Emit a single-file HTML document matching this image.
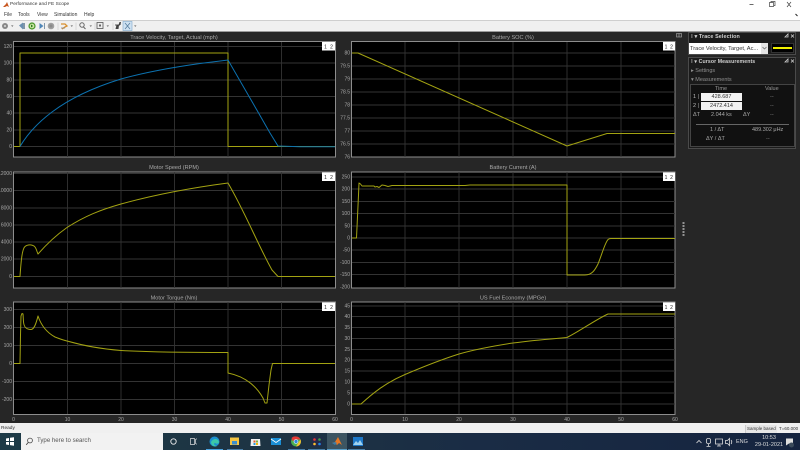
<!DOCTYPE html>
<html><head><meta charset="utf-8"><style>
html,body{margin:0;padding:0;background:#262626}
body{width:800px;height:450px;overflow:hidden;position:relative;font-family:"Liberation Sans",sans-serif}
#r{position:absolute;left:0;top:0;width:800px;height:450px;overflow:hidden;background:#262626;filter:blur(.35px)}
.a{position:absolute}
.t{position:absolute;white-space:nowrap;color:#333;font-size:5.5px;line-height:8px}
.w{color:#bdbdbd}
</style></head><body><div id="r">
<div class="a" style="left:0;top:0;width:800px;height:20px;background:#fff"></div>
<div class="a" style="left:0;top:20px;width:800px;height:1px;background:#cfcfcf"></div>
<div class="a" style="left:0;top:21px;width:800px;height:10px;background:#f0f0f0"></div>
<div class="a" style="left:0;top:31px;width:800px;height:1px;background:#9a9a9a"></div>
<svg class="a" style="left:3px;top:2px" width="6" height="6" viewBox="0 0 6 6"><path d="M0 5L3 2L4 0L6 5L4 4L2 5Z" fill="#c8551e"/></svg>
<div class="t" style="left:10px;top:1px;font-size:4.8px">Performance and FE Scope</div>
<div class="t" style="left:4px;top:11px;font-size:5px">File</div>
<div class="t" style="left:18px;top:11px;font-size:5px">Tools</div>
<div class="t" style="left:37px;top:11px;font-size:5px">View</div>
<div class="t" style="left:54px;top:11px;font-size:5px">Simulation</div>
<div class="t" style="left:84px;top:11px;font-size:5px">Help</div>
<svg class="a" style="left:0;top:0" width="800" height="32" viewBox="0 0 800 32">
<path d="M749.500 4.500h4" stroke="#444" stroke-width=".8" fill="none"/>
<path d="M769.500 2.500h4v4h-4zM771 2.500v-1h4v4h-1" stroke="#444" stroke-width=".7" fill="none"/>
<path d="M787 2l4 5M791 2l-4 5" stroke="#444" stroke-width=".7" fill="none"/>
<path d="M795.500 14l2 2" stroke="#222" stroke-width="1"/>
<circle cx="5" cy="26" r="3" fill="#888"/><circle cx="5" cy="26" r="1" fill="#ddd"/>
<path d="M11 25.500h2.500l-1.200 1.200z" fill="#555"/>
<path d="M19 25.500l4-3v7z" fill="#6a8fb0"/><rect x="23" y="23" width="2" height="6" fill="#7f95a8"/>
<circle cx="32" cy="26" r="3.600" fill="#4e9a2e"/><circle cx="32" cy="26" r="2.300" fill="#cfe8a8"/><path d="M31 24.500l2.200 1.500-2.200 1.500z" fill="#2c7a1c"/>
<path d="M39.500 23l4 3-4 3z" fill="#4f86b8"/><rect x="44" y="23" width="1" height="6" fill="#7f95a8"/>
<circle cx="51" cy="26" r="3.300" fill="#a0a0a0"/><rect x="49.500" y="24.500" width="3" height="3" fill="#8a8a8a"/>
<path d="M58 22.500V30M76 22.500V30M95 22.500V30M113 22.500V30" stroke="#c8c8c8" stroke-width=".6"/>
<path d="M61 24h4l2 2-2 1-3 2" stroke="#d89030" stroke-width="1.300" fill="none"/><path d="M61 28h4" stroke="#888" stroke-width=".8"/>
<path d="M70.500 25.500h2.500l-1.200 1.200z" fill="#555"/>
<circle cx="82" cy="25" r="2.200" fill="none" stroke="#666" stroke-width="1"/><path d="M83.500 27l2 2" stroke="#666" stroke-width="1.100"/>
<path d="M89.500 25.500h2.500l-1.200 1.200z" fill="#555"/>
<rect x="97" y="22.500" width="6" height="6" fill="#eee" stroke="#555" stroke-width=".8"/><rect x="99" y="24.500" width="2" height="2" fill="#666"/>
<path d="M106.500 25.500h2.500l-1.200 1.200z" fill="#555"/>
<path d="M115.500 29l1-4h2l1-3h1.500l-.5 3h-1.500l-.5 4z" fill="#444"/><path d="M115 25h5" stroke="#333" stroke-width=".8"/>
<rect x="123" y="21.500" width="9" height="9" fill="#cfe2f2" stroke="#7fa8cc" stroke-width=".6"/><path d="M125 29l5-6M125 23l5 6" stroke="#5a7f9f" stroke-width=".8"/>
<path d="M134 25.500h2.500l-1.200 1.200z" fill="#555"/>
</svg>

<svg class="a" style="left:0;top:32px" width="686" height="391" viewBox="0 32 686 391" font-family="Liberation Sans, sans-serif" font-size="5" fill="#a8a8a8">
<g fill="#000" stroke="#8d8d8d" stroke-width="1">
<rect x="13.500" y="41.500" width="322" height="115.500"/>
<rect x="351.500" y="41.500" width="323.500" height="115.500"/>
<rect x="13.500" y="172" width="322" height="116"/>
<rect x="351.500" y="172" width="323.500" height="116"/>
<rect x="13.500" y="302" width="322" height="112.500"/>
<rect x="351.500" y="302" width="323.500" height="112.500"/>
</g>
<g stroke="#333" stroke-width=".9" fill="none">
<path d="M14 46.500H335M14 63H335M14 80H335M14 96.500H335M14 113H335M14 130H335M14 146.500H335M67.500 42V157M121 42V157M174.500 42V157M228 42V157M281.500 42V157"/>
<path d="M352 53H675M352 66H675M352 79H675M352 92H675M352 105H675M352 118H675M352 131H675M352 144H675M405 42V157M459 42V157M513 42V157M567 42V157M621 42V157"/>
<path d="M14 173.500H335M14 190.500H335M14 208H335M14 225H335M14 242H335M14 259H335M14 276.500H335M67.500 172V288M121 172V288M174.500 172V288M228 172V288M281.500 172V288"/>
<path d="M352 177H675M352 189H675M352 201.500H675M352 213.500H675M352 226H675M352 238H675M352 250H675M352 262.500H675M352 274.500H675M405 172V288M459 172V288M513 172V288M567 172V288M621 172V288"/>
<path d="M14 309.500H335M14 327.500H335M14 345.500H335M14 363.500H335M14 381.500H335M14 399.500H335M67.500 302V414M121 302V414M174.500 302V414M228 302V414M281.500 302V414"/>
<path d="M352 306H675M352 316.500H675M352 327.500H675M352 338.500H675M352 349.500H675M352 360H675M352 371H675M352 382H675M352 393H675M352 404H675M405 302V414M459 302V414M513 302V414M567 302V414M621 302V414"/>
</g>
<g fill="none" stroke="#a3a312" stroke-width="1" stroke-linejoin="round">
<path d="M14 146.500H20V53H228V146.500H335"/>
<path d="M352 53H358L567 146L607 133.500H675"/>
<path d="M14 276.500H20C21 262 22 249 25 246.500C28 244 33 244.500 35 247C36.500 249 37 252 38 254C45 246 55 236 67 227.500C85 216 100 210 121 204C150 196 190 188 228 183C245 212 258 245 272 270L278 276.500H335"/>
<path d="M352 238H356.500L358.500 195L359 183L360.500 184L362 186H374L375 187L377 186.500L379 187.500L382 185L385 185.500L388 186.500L392 185.500H465L470 185H567V275H585C592 275 595 270 598 264C602 254 604 246 607 241C608 239 609 238.500 611 238.500H675"/>
<path d="M14 363.500H20L20.500 335L21 316L22 313.500L23 314L23.500 322C24 327 26 329.500 31 329.500C34 329.500 36 324 38 316C40 322 44 331 55 337C60 339 63 340 67 341C85 346 100 349 121 350.500C150 352 190 352.500 228 352.500V373C243 376 255 384 263 398L265 403H267L269 385L271 370L272.500 363.500H335"/>
<path d="M352 404H361C372 394 385 383 405 374.500C425 366 440 360 459 354C480 348 500 345 513 343C535 340 550 339 567 337.500C580 331 595 320 608 314H675"/>
</g>
<path d="M20 146.500C28 133 40 121 52 112C72 97 95 87 121 79C150 71 175 67 200 63.500L228 60L258 112L270 133L278 146L300 146.800H335" fill="none" stroke="#0c72b0" stroke-width="1"/>
<g text-anchor="middle" font-size="5.600">
<text x="174" y="39">Trace Velocity, Target, Actual (mph)</text>
<text x="513" y="39">Battery SOC (%)</text>
<text x="174" y="169">Motor Speed (RPM)</text>
<text x="513" y="169">Battery Current (A)</text>
<text x="174" y="299.500">Motor Torque (Nm)</text>
<text x="513" y="299.500">US Fuel Economy (MPGe)</text>
</g>
<g text-anchor="end">
<text x="12" y="48">120</text><text x="12" y="64.700">100</text><text x="12" y="81.500">80</text><text x="12" y="98">60</text><text x="12" y="114.700">40</text><text x="12" y="131.500">20</text><text x="12" y="148">0</text>
<text x="350" y="54.700">80</text><text x="350" y="67.700">79.5</text><text x="350" y="80.700">79</text><text x="350" y="93.700">78.5</text><text x="350" y="106.700">78</text><text x="350" y="119.700">77.5</text><text x="350" y="132.700">77</text><text x="350" y="145.700">76.5</text><text x="350" y="158.500">76</text>
<text x="12" y="175">12000</text><text x="12" y="192">10000</text><text x="12" y="209.700">8000</text><text x="12" y="226.700">6000</text><text x="12" y="243.700">4000</text><text x="12" y="260.700">2000</text><text x="12" y="278.200">0</text>
<text x="350" y="178.700">250</text><text x="350" y="190.700">200</text><text x="350" y="203">150</text><text x="350" y="215">100</text><text x="350" y="227.700">50</text><text x="350" y="239.700">0</text><text x="350" y="251.700">-50</text><text x="350" y="264">-100</text><text x="350" y="276">-150</text><text x="350" y="288.700">-200</text>
<text x="12" y="311">300</text><text x="12" y="329">200</text><text x="12" y="347">100</text><text x="12" y="365">0</text><text x="12" y="383">-100</text><text x="12" y="401">-200</text>
<text x="350" y="307.700">45</text><text x="350" y="318">40</text><text x="350" y="329">35</text><text x="350" y="340">30</text><text x="350" y="351">25</text><text x="350" y="361.700">20</text><text x="350" y="372.700">15</text><text x="350" y="383.700">10</text><text x="350" y="394.700">5</text><text x="350" y="405.700">0</text>
</g>
<g text-anchor="middle">
<text x="13.500" y="421">0</text><text x="67.500" y="421">10</text><text x="121" y="421">20</text><text x="174.500" y="421">30</text><text x="228" y="421">40</text><text x="281.500" y="421">50</text><text x="335" y="421">60</text>
<text x="351.500" y="421">0</text><text x="405" y="421">10</text><text x="459" y="421">20</text><text x="513" y="421">30</text><text x="567" y="421">40</text><text x="621" y="421">50</text><text x="675" y="421">60</text>
</g>
<g>
<rect x="322" y="42" width="13" height="8.500" fill="#fff"/><rect x="663" y="42" width="12" height="8.500" fill="#fff"/>
<rect x="322" y="172.500" width="13" height="8.500" fill="#fff"/><rect x="663" y="172.500" width="12" height="8.500" fill="#fff"/>
<rect x="322" y="302.500" width="13" height="8.500" fill="#fff"/><rect x="663" y="302.500" width="12" height="8.500" fill="#fff"/>
</g>
<g fill="#222" font-size="5" text-anchor="middle">
<text x="325.500" y="48.500">1</text><text x="331.500" y="48.500">2</text><text x="666" y="48.500">1</text><text x="671.500" y="48.500">2</text>
<text x="325.500" y="179">1</text><text x="331.500" y="179">2</text><text x="666" y="179">1</text><text x="671.500" y="179">2</text>
<text x="325.500" y="309">1</text><text x="331.500" y="309">2</text><text x="666" y="309">1</text><text x="671.500" y="309">2</text>
</g>
<rect x="676.500" y="33.500" width="5" height="3.500" fill="#333" stroke="#aaa" stroke-width=".6"/>
<path d="M679 33.500V37" stroke="#aaa" stroke-width=".6"/>
<path d="M683.500 222.500V223.500M683.500 225.500V226.500M683.500 228.500V229.500M683.500 231.500V232.500M683.500 234.500V235.500" stroke="#fff" stroke-width="2"/>
</svg>

<div class="a" style="left:688px;top:32px;width:108px;height:23px;background:#1b1b1b;border:1px solid #4a4a4a;box-sizing:border-box"></div>
<div class="t w" style="left:691px;top:33px;font-size:5.400px;font-weight:bold;color:#d0d0d0;letter-spacing:.1px">⁞ ▾ Trace Selection</div>
<div class="a" style="left:689px;top:43px;width:79px;height:11px;background:#fff"></div>
<div class="t" style="left:690px;top:44.500px;font-size:5.700px;color:#333">Trace Velocity, Target, Ac...</div>
<div class="a" style="left:761px;top:43px;width:7px;height:11px;background:#e5e5e5"></div>
<svg class="a" style="left:761px;top:46px" width="7" height="5"><path d="M1.500 1l2 2 2-2" stroke="#666" fill="none" stroke-width=".7"/></svg>
<div class="a" style="left:771px;top:43px;width:23px;height:10px;background:#000;border:1px solid #333;box-sizing:border-box"></div>
<div class="a" style="left:773px;top:47px;width:19px;height:1.500px;background:#f0f000"></div>

<div class="a" style="left:688px;top:57px;width:108px;height:92px;background:#1b1b1b;border:1px solid #4a4a4a;box-sizing:border-box"></div>
<div class="t" style="left:691px;top:58px;font-size:5.200px;font-weight:bold;color:#d0d0d0;letter-spacing:.1px">⁞ ▾ Cursor Measurements</div>
<svg class="a" style="left:783px;top:33px" width="12" height="32" fill="none" stroke="#cfcfcf" stroke-width=".8"><path d="M2 4l3-3v3zM8 1.500l3 3M11 1.500l-3 3M2 29l3-3v3zM8 26.500l3 3M11 26.500l-3 3"/></svg>
<div class="t" style="left:691px;top:67px;color:#8f8f8f;font-size:5.500px">▸ Settings</div>
<div class="t" style="left:691px;top:75.500px;color:#8f8f8f;font-size:5.500px">▾ Measurements</div>
<div class="a" style="left:690px;top:84px;width:105px;height:63px;background:#111;border:1px solid #444;box-sizing:border-box"></div>
<div class="t" style="left:715px;top:85px;color:#999;font-size:5.500px">Time</div>
<div class="t" style="left:765px;top:85px;color:#999;font-size:5.500px">Value</div>
<div class="t" style="left:693px;top:93px;color:#bbb">1 <span style="color:#aaa">|</span></div>
<div class="t" style="left:693px;top:102px;color:#bbb">2 <span style="color:#aaa">|</span></div>
<div class="a" style="left:701px;top:93px;width:41px;height:8px;background:#f2f2f2"></div>
<div class="a" style="left:701px;top:102px;width:41px;height:8px;background:#f2f2f2"></div>
<div class="t" style="left:701px;top:93px;width:41px;text-align:center">428.687</div>
<div class="t" style="left:701px;top:102px;width:41px;text-align:center">2472.414</div>
<div class="t w" style="left:693px;top:111px;color:#aaa">ΔT</div>
<div class="t w" style="left:711px;top:111px;color:#aaa">2.044 ks</div>
<div class="t w" style="left:743px;top:111px;color:#aaa">ΔY</div>
<div class="t w" style="left:770px;top:111px;color:#888">--</div>
<div class="t w" style="left:770px;top:93px;color:#888">--</div>
<div class="t w" style="left:770px;top:102px;color:#888">--</div>
<div class="a" style="left:696px;top:124px;width:93px;height:1px;background:#666"></div>
<div class="t w" style="left:710px;top:126px;color:#aaa">1 / ΔT</div>
<div class="t w" style="left:752px;top:126px;color:#aaa">489.302 μHz</div>
<div class="t w" style="left:706px;top:135px;color:#aaa">ΔY / ΔT</div>
<div class="t w" style="left:766px;top:135px;color:#888">--</div>

<div class="a" style="left:0;top:423px;width:800px;height:10px;background:#f0f0f0"></div>
<div class="t" style="left:1px;top:425px;font-size:4.800px">Ready</div>
<div class="a" style="left:745px;top:424.500px;width:32px;height:8px;background:#e6e6e6;border-left:1px solid #ccc;box-sizing:border-box"></div>
<div class="t" style="left:747px;top:425px;font-size:4.500px">Sample based</div>
<div class="t" style="left:779px;top:425px;font-size:4.500px">T=60.000</div>

<div class="a" style="left:0;top:433px;width:800px;height:17px;background:linear-gradient(90deg,#1d3a47 0,#1d3343 35%,#1a2c45 60%,#15243f 100%)"></div>
<div class="a" style="left:21px;top:433px;width:142px;height:17px;background:#f2f2f2"></div>
<div class="t" style="left:37px;top:437px;font-size:6.100px;color:#555">Type here to search</div>
<svg class="a" style="left:0;top:433px" width="800" height="17" viewBox="0 433 800 17">
<path d="M6 438.500l3-.5v3H6zM10 437.800l4-.6V441h-4zM6 442h3v3l-3-.5zM10 442h4v3.700l-4-.6z" fill="#fff"/>
<circle cx="30" cy="440.500" r="2.400" fill="none" stroke="#444" stroke-width=".8"/><path d="M28.200 442.500l-2 2.300" stroke="#444" stroke-width=".9"/>
<circle cx="173.500" cy="441.500" r="2.700" fill="none" stroke="#eee" stroke-width=".9"/>
<path d="M190.500 438.500h4v6h-4zM195.500 439v5M196.500 438.500v1M196.500 443.500v1" stroke="#ddd" stroke-width=".7" fill="none"/>
<circle cx="214.500" cy="441.500" r="5" fill="#1b8fd0"/><path d="M211 442c2-4 7-4 8 0 0 2-3 2-3.500 1-3 0-1 3 1.500 3-3 1.500-6-1-6-4z" fill="#3cc8a8"/>
<rect x="230" y="437.500" width="9" height="7.500" fill="#f4c542"/><rect x="232" y="441" width="5" height="3.500" fill="#3a8fd0"/>
<path d="M251 439h9l.5 7h-10z" fill="#f0f0f0"/><rect x="253.500" y="440.500" width="2" height="2" fill="#e25a2b"/><rect x="256" y="440.500" width="2" height="2" fill="#7cb342"/><rect x="253.500" y="443" width="2" height="2" fill="#2a9ad8"/><rect x="256" y="443" width="2" height="2" fill="#f5b800"/>
<rect x="271" y="438" width="10" height="7" fill="#1a8fd6"/><path d="M271 439l5 3.500 5-3.500" stroke="#fff" fill="none" stroke-width=".8"/>
<circle cx="296" cy="441.500" r="5" fill="#4caf50"/><path d="M296 436.500a5 5 0 0 1 4.500 3H296l-3.500 1.500-1-3a5 5 0 0 1 4.500-1.500z" fill="#e53935"/><path d="M300.500 439.500a5 5 0 0 1-4.500 7l2.500-4z" fill="#fbc02d"/><circle cx="296" cy="441.500" r="2" fill="#2f86e0" stroke="#fff" stroke-width=".6"/>
<rect x="312" y="437" width="10" height="9.500" fill="#232a4a"/><circle cx="314.500" cy="439.500" r="1.300" fill="#e53935"/><circle cx="319.500" cy="439.500" r="1.300" fill="#43a047"/><circle cx="314.500" cy="444" r="1.300" fill="#fbc02d"/><circle cx="319.500" cy="444" r="1.300" fill="#1e88e5"/>
<rect x="327" y="433" width="20" height="17" fill="#3d5562"/>
<path d="M332 443l3-1 3-5 2 4 2 4-3-2-2 2-2-2z" fill="#e87722"/><path d="M332 443l3-1 2 1-2 2z" fill="#3a7ca8"/>
<rect x="353" y="437" width="10" height="9" fill="#1e78c8"/><path d="M353 445l3-4 2 2 2-3 3 5z" fill="#9fd2f0"/>
<g fill="#4aa3df"><rect x="206" y="449" width="17" height="1"/><rect x="227" y="449" width="16" height="1" fill="#4a7fa8"/><rect x="288" y="449" width="17" height="1" fill="#4a7fa8"/><rect x="308" y="449" width="17" height="1" fill="#4a7fa8"/><rect x="327" y="449" width="20" height="1" fill="#5a9fca"/><rect x="348" y="449" width="17" height="1" fill="#4a7fa8"/></g>
<path d="M696.500 443l2.500-2.500 2.500 2.500" stroke="#ddd" fill="none" stroke-width=".8"/>
<rect x="706.500" y="438.500" width="4" height="5" rx="1.500" fill="none" stroke="#ddd" stroke-width=".8"/><path d="M708.500 444v2M706.500 446.500h4" stroke="#ddd" stroke-width=".8"/>
<path d="M715.500 439h7v5h-7zM717 446h4M719 444v2" stroke="#ddd" fill="none" stroke-width=".8"/>
<path d="M725.500 440.500h2l2-2v7l-2-2h-2zM731 440c1 1 1 3 0 4" stroke="#ddd" fill="none" stroke-width=".8"/>
<path d="M786 438.500h7v5h-4l-3 2z" fill="#ddd"/><circle cx="791.500" cy="445" r="2.500" fill="#3a4a5a"/>
</svg>
<div class="t" style="left:736px;top:438px;font-size:5.500px;color:#ddd">ENG</div>
<div class="t" style="left:758px;top:434px;width:22px;text-align:center;font-size:5.500px;color:#ddd">10:53</div>
<div class="t" style="left:750px;top:441px;width:38px;text-align:center;font-size:5.500px;color:#ddd">29-01-2021</div>
</div></body></html>
